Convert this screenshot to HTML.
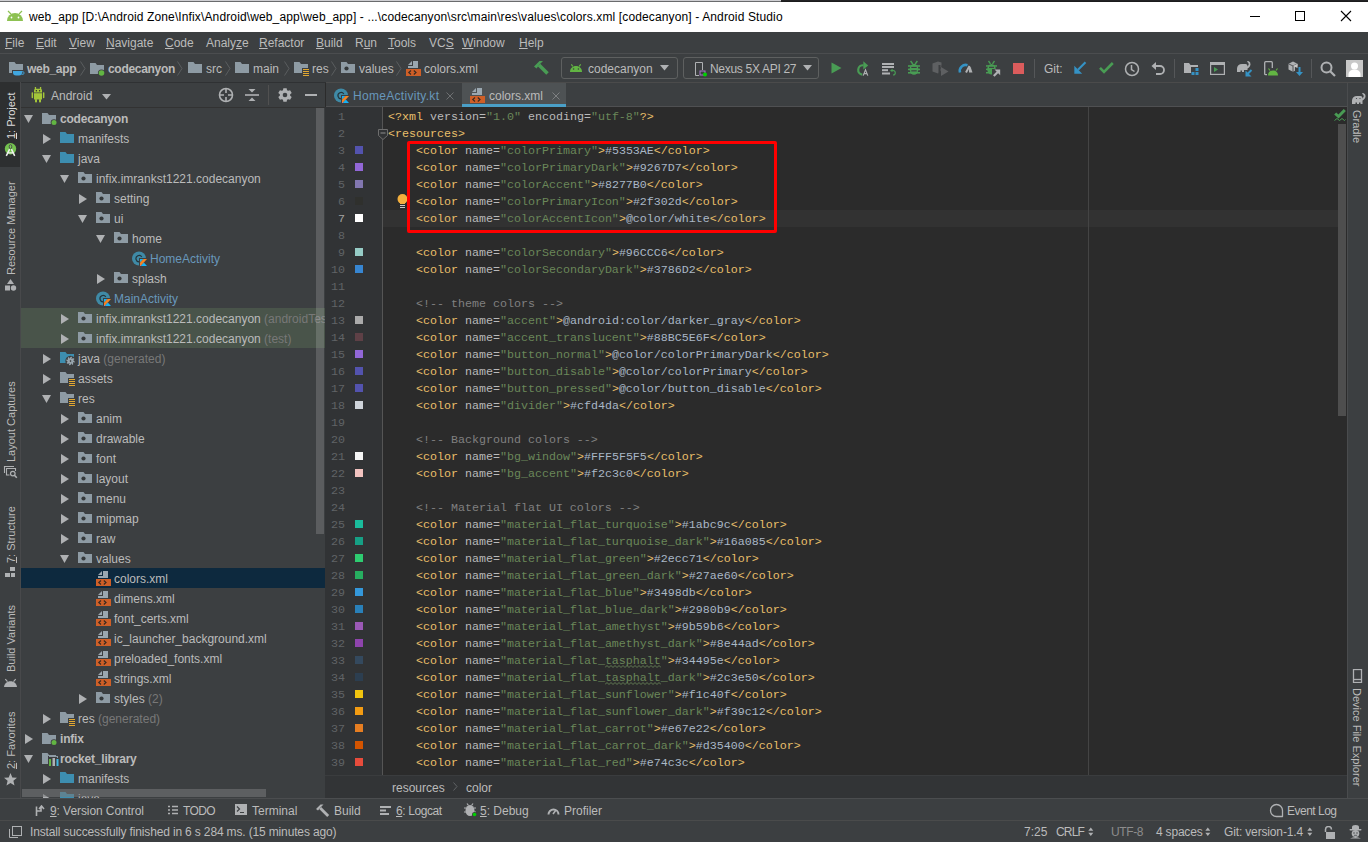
<!DOCTYPE html>
<html><head><meta charset="utf-8">
<style>
*{margin:0;padding:0;box-sizing:border-box}
html,body{width:1368px;height:842px;overflow:hidden;background:#3c3f41;font-family:"Liberation Sans",sans-serif;font-size:12px;color:#bbbbbb}
.a{position:absolute;display:block}
.t{position:absolute;white-space:pre;line-height:1}
.u{text-decoration:underline;text-underline-offset:1px}
</style></head><body>
<div class="a" style="left:0px;top:0px;width:781px;height:1px;background:#cfcfd3;"></div>
<div class="a" style="left:0px;top:1px;width:781px;height:1px;background:#6a6b6d;"></div>
<div class="a" style="left:781px;top:0px;width:587px;height:1px;background:#232325;"></div>
<div class="a" style="left:781px;top:1px;width:587px;height:1px;background:#1b1b1c;"></div>
<div class="a" style="left:0px;top:2px;width:1368px;height:30px;background:#ffffff;"></div>
<svg class="a" style="left:6px;top:10px;" width="18" height="11" viewBox="0 0 18 11"><path d="M2 1 L5 4 M16 1 L13 4" stroke="#8dc152" stroke-width="1.2"/><path d="M1 11 A8 8 0 0 1 17 11 Z" fill="#8dc152"/><circle cx="5.5" cy="7.5" r="0.9" fill="#fff"/><circle cx="12.5" cy="7.5" r="0.9" fill="#fff"/></svg>
<div class="t" style="left:29px;top:11px;font-size:12px;color:#000000;font-family:'Liberation Sans',sans-serif;letter-spacing:0.13px;">web_app [D:\Android Zone\Infix\Android\web_app\web_app] - ...\codecanyon\src\main\res\values\colors.xml [codecanyon] - Android Studio</div>
<div class="a" style="left:1250px;top:16px;width:10px;height:1px;background:#000;"></div>
<div class="a" style="left:1295px;top:11px;width:10px;height:10px;background:transparent;border:1px solid #000"></div>
<svg class="a" style="left:1340px;top:10px;" width="12" height="12" viewBox="0 0 12 12"><path d="M1 1 L11 11 M11 1 L1 11" stroke="#000" stroke-width="1.1"/></svg>
<div class="a" style="left:0px;top:32px;width:1368px;height:21px;background:#3c3f41;"></div>
<div class="a" style="left:0px;top:53px;width:1368px;height:1px;background:#4b4d4f;"></div>
<div class="t" style="left:5px;top:37px;font-size:12px;color:#bbbbbb;font-family:'Liberation Sans',sans-serif;"><span class="u">F</span>ile</div>
<div class="t" style="left:36px;top:37px;font-size:12px;color:#bbbbbb;font-family:'Liberation Sans',sans-serif;"><span class="u">E</span>dit</div>
<div class="t" style="left:69px;top:37px;font-size:12px;color:#bbbbbb;font-family:'Liberation Sans',sans-serif;"><span class="u">V</span>iew</div>
<div class="t" style="left:106px;top:37px;font-size:12px;color:#bbbbbb;font-family:'Liberation Sans',sans-serif;"><span class="u">N</span>avigate</div>
<div class="t" style="left:165px;top:37px;font-size:12px;color:#bbbbbb;font-family:'Liberation Sans',sans-serif;"><span class="u">C</span>ode</div>
<div class="t" style="left:206px;top:37px;font-size:12px;color:#bbbbbb;font-family:'Liberation Sans',sans-serif;">Analy<span class="u">z</span>e</div>
<div class="t" style="left:259px;top:37px;font-size:12px;color:#bbbbbb;font-family:'Liberation Sans',sans-serif;"><span class="u">R</span>efactor</div>
<div class="t" style="left:316px;top:37px;font-size:12px;color:#bbbbbb;font-family:'Liberation Sans',sans-serif;"><span class="u">B</span>uild</div>
<div class="t" style="left:355px;top:37px;font-size:12px;color:#bbbbbb;font-family:'Liberation Sans',sans-serif;">R<span class="u">u</span>n</div>
<div class="t" style="left:388px;top:37px;font-size:12px;color:#bbbbbb;font-family:'Liberation Sans',sans-serif;"><span class="u">T</span>ools</div>
<div class="t" style="left:429px;top:37px;font-size:12px;color:#bbbbbb;font-family:'Liberation Sans',sans-serif;">VC<span class="u">S</span></div>
<div class="t" style="left:462px;top:37px;font-size:12px;color:#bbbbbb;font-family:'Liberation Sans',sans-serif;"><span class="u">W</span>indow</div>
<div class="t" style="left:519px;top:37px;font-size:12px;color:#bbbbbb;font-family:'Liberation Sans',sans-serif;"><span class="u">H</span>elp</div>
<div class="a" style="left:0px;top:54px;width:1368px;height:28px;background:#3c3f41;"></div>
<div class="a" style="left:0px;top:82px;width:326px;height:1px;background:#2f3133;"></div>
<div class="a" style="left:326px;top:82px;width:1042px;height:1px;background:#4b4b4b;"></div>
<svg class="a" style="left:9px;top:62px;" width="17" height="16" viewBox="0 0 17 16"><path d="M0 0 H5.5 L7 2 H14 V11 H0 Z" fill="#8e9ba4"/><path d="M3 8 H14 V10.5 A4 4 0 0 1 10 14.5 H7 A4 4 0 0 1 3 10.5 Z" fill="#3c3f41"/><path d="M4 9 H13 V10.5 A3 3 0 0 1 10 13.5 H7 A3 3 0 0 1 4 10.5 Z" fill="#40a6e0"/><path d="M13 9.8 H14.3 A1.3 1.3 0 0 1 14.3 12.2 H12.5" stroke="#40a6e0" stroke-width="1" fill="none"/></svg>
<div class="t" style="left:27px;top:63px;font-size:12px;color:#bbbbbb;font-family:'Liberation Sans',sans-serif;font-weight:bold;letter-spacing:-0.3px;">web_app</div>
<svg class="a" style="left:80px;top:61px;" width="6" height="15" viewBox="0 0 6 15"><path d="M0.5 0.5 L5 7.5 L0.5 14.5" stroke="#5b5e60" stroke-width="1" fill="none"/></svg>
<svg class="a" style="left:90px;top:63px;" width="17" height="16" viewBox="0 0 17 16"><path d="M0 0 H5.5 L7 2 H14 V11 H0 Z" fill="#8e9ba4"/><circle cx="11.5" cy="10" r="3.6" fill="#3c3f41"/><circle cx="11.5" cy="10" r="2.8" fill="#62b543"/></svg>
<div class="t" style="left:108px;top:63px;font-size:12px;color:#bbbbbb;font-family:'Liberation Sans',sans-serif;font-weight:bold;letter-spacing:-0.3px;">codecanyon</div>
<svg class="a" style="left:177px;top:61px;" width="6" height="15" viewBox="0 0 6 15"><path d="M0.5 0.5 L5 7.5 L0.5 14.5" stroke="#5b5e60" stroke-width="1" fill="none"/></svg>
<svg class="a" style="left:188px;top:62px;" width="17" height="16" viewBox="0 0 17 16"><path d="M0 0 H5.5 L7 2 H14 V11 H0 Z" fill="#8e9ba4"/></svg>
<div class="t" style="left:206px;top:63px;font-size:12px;color:#bbbbbb;font-family:'Liberation Sans',sans-serif;">src</div>
<svg class="a" style="left:225px;top:61px;" width="6" height="15" viewBox="0 0 6 15"><path d="M0.5 0.5 L5 7.5 L0.5 14.5" stroke="#5b5e60" stroke-width="1" fill="none"/></svg>
<svg class="a" style="left:235px;top:62px;" width="17" height="16" viewBox="0 0 17 16"><path d="M0 0 H5.5 L7 2 H14 V11 H0 Z" fill="#8e9ba4"/></svg>
<div class="t" style="left:253px;top:63px;font-size:12px;color:#bbbbbb;font-family:'Liberation Sans',sans-serif;">main</div>
<svg class="a" style="left:284px;top:61px;" width="6" height="15" viewBox="0 0 6 15"><path d="M0.5 0.5 L5 7.5 L0.5 14.5" stroke="#5b5e60" stroke-width="1" fill="none"/></svg>
<svg class="a" style="left:294px;top:62px;" width="17" height="16" viewBox="0 0 17 16"><path d="M0 0 H5.5 L7 2 H14 V11 H0 Z" fill="#8e9ba4"/><rect x="8" y="6" width="8" height="8" fill="#3c3f41"/><rect x="9" y="7" width="6" height="1" fill="#e0a732"/><rect x="9" y="9" width="6" height="1" fill="#e0a732"/><rect x="9" y="11" width="6" height="1" fill="#e0a732"/><rect x="9" y="13" width="6" height="1" fill="#e0a732"/></svg>
<div class="t" style="left:312px;top:63px;font-size:12px;color:#bbbbbb;font-family:'Liberation Sans',sans-serif;">res</div>
<svg class="a" style="left:331px;top:61px;" width="6" height="15" viewBox="0 0 6 15"><path d="M0.5 0.5 L5 7.5 L0.5 14.5" stroke="#5b5e60" stroke-width="1" fill="none"/></svg>
<svg class="a" style="left:341px;top:62px;" width="17" height="16" viewBox="0 0 17 16"><path d="M0 0 H5.5 L7 2 H14 V11 H0 Z" fill="#8e9ba4"/><circle cx="5.5" cy="6.5" r="2.1" fill="#34383a"/></svg>
<div class="t" style="left:359px;top:63px;font-size:12px;color:#bbbbbb;font-family:'Liberation Sans',sans-serif;">values</div>
<svg class="a" style="left:396px;top:61px;" width="6" height="15" viewBox="0 0 6 15"><path d="M0.5 0.5 L5 7.5 L0.5 14.5" stroke="#5b5e60" stroke-width="1" fill="none"/></svg>
<svg class="a" style="left:406px;top:60px;" width="16" height="16" viewBox="0 0 16 16"><path d="M2 5 L6 1 V5 Z M7 1 H12 V8 H2 V6 H7 Z" fill="#9aa7b0"/><rect x="0" y="9" width="15" height="7" fill="#cf5f27"/><path d="M5 10.5 L2.8 12.5 L5 14.5 M7.8 10.5 L10 12.5 L7.8 14.5" stroke="#3a2a22" stroke-width="1.2" fill="none"/></svg>
<div class="t" style="left:424px;top:63px;font-size:12px;color:#bbbbbb;font-family:'Liberation Sans',sans-serif;">colors.xml</div>
<svg class="a" style="left:534px;top:60px;" width="16" height="16" viewBox="0 0 16 16"><path d="M5.5 1 H9 L5.5 4.5 L2.5 8.5 L0 6.5 Z" fill="#499c54"/><path d="M5 5 L13.5 13.5" stroke="#499c54" stroke-width="3.6"/></svg>
<div class="a" style="left:561px;top:57px;width:117px;height:22px;background:transparent;border:1px solid #5e6060;border-radius:3px"></div>
<svg class="a" style="left:569px;top:64px;" width="14" height="8" viewBox="0 0 14 8"><path d="M2.3 0.3 L3.8 2.3 M11.7 0.3 L10.2 2.3" stroke="#62b543" stroke-width="1.1"/><path d="M1 8 C1 4.5 3.5 2 7 2 C10.5 2 13 4.5 13 8 Z" fill="#62b543"/><circle cx="4.6" cy="5" r="0.8" fill="#3c3f41"/><circle cx="9.4" cy="5" r="0.8" fill="#3c3f41"/></svg>
<div class="t" style="left:588px;top:63px;font-size:12px;color:#bbbbbb;font-family:'Liberation Sans',sans-serif;">codecanyon</div>
<svg class="a" style="left:660px;top:65px;" width="9" height="6" viewBox="0 0 9 6"><path d="M0 0 H9 L4.5 5.5 Z" fill="#afb1b3"/></svg>
<div class="a" style="left:683px;top:57px;width:136px;height:22px;background:transparent;border:1px solid #5e6060;border-radius:3px"></div>
<svg class="a" style="left:693px;top:61px;" width="16" height="16" viewBox="0 0 16 16"><path d="M2.5 1.5 H9.5 V14.5 H2.5 Z" stroke="#afb1b3" fill="none" stroke-width="1"/><rect x="6" y="9" width="7" height="6" fill="#3c3f41"/><rect x="7" y="10" width="5" height="4" fill="none" stroke="#a77bca" stroke-width="1"/><circle cx="12" cy="13.5" r="2" fill="#00d000"/></svg>
<div class="t" style="left:710px;top:63px;font-size:12px;color:#bbbbbb;font-family:'Liberation Sans',sans-serif;letter-spacing:-0.3px;">Nexus 5X API 27</div>
<svg class="a" style="left:803px;top:65px;" width="9" height="6" viewBox="0 0 9 6"><path d="M0 0 H9 L4.5 5.5 Z" fill="#afb1b3"/></svg>
<svg class="a" style="left:831px;top:62px;" width="11" height="12" viewBox="0 0 11 12"><path d="M0.5 0.5 L10.5 6 L0.5 11.5 Z" fill="#499c54"/></svg>
<svg class="a" style="left:854px;top:60px;" width="16" height="16" viewBox="0 0 16 16"><path d="M8.3 14.6 A4.6 4.6 0 0 1 9.5 5.3" stroke="#499c54" stroke-width="2.2" fill="none"/><path d="M9.3 1.2 L14.2 5.4 L9.3 9.6 Z" fill="#499c54"/><path d="M9.2 15.6 L11.5 9.8 L13.8 15.6 M10 13.6 H13" stroke="#afb1b3" stroke-width="1.2" fill="none"/></svg>
<svg class="a" style="left:882px;top:62px;" width="15" height="14" viewBox="0 0 15 14"><rect x="0" y="1" width="12" height="2" fill="#afb1b3"/><rect x="0" y="4" width="12" height="2" fill="#afb1b3"/><rect x="0" y="7.2" width="6" height="2" fill="#afb1b3"/><rect x="0" y="10.5" width="8" height="2" fill="#afb1b3"/><path d="M9.2 8.6 C11.5 7.8 13.5 9 13.3 11 C13.2 12.3 12 13 11 13" stroke="#499c54" stroke-width="1.2" fill="none"/><path d="M8 8.8 L10.4 6.8 L10.6 10 Z" fill="#499c54"/></svg>
<svg class="a" style="left:906px;top:60px;" width="16" height="16" viewBox="0 0 16 16"><path d="M4.6 1 L6.8 4 M11.4 1 L9.2 4" stroke="#499c54" stroke-width="1.4"/><ellipse cx="8" cy="9.3" rx="4.4" ry="5.5" fill="#499c54"/><rect x="2" y="5.2" width="12" height="1.6" fill="#499c54"/><rect x="2" y="8.6" width="12" height="1.6" fill="#499c54"/><rect x="2" y="12" width="12" height="1.6" fill="#499c54"/><rect x="5.3" y="6.9" width="5.4" height="1.1" fill="#3c3f41"/><rect x="5.3" y="10.3" width="5.4" height="1.1" fill="#3c3f41"/></svg>
<svg class="a" style="left:932px;top:61px;" width="17" height="17" viewBox="0 0 17 17"><path d="M0.5 2.5 L6 0.5 L9.5 1.5 V9 L6 12.5 L0.5 10.5 Z" fill="#5e6062"/><rect x="6.5" y="4" width="2" height="8" fill="#3c3f41"/><path d="M7.5 7 L10 7 L10 4.5" stroke="#3c3f41" stroke-width="1" fill="none"/><path d="M9 6 L16.5 10.5 L9 15 Z" fill="#5e6062"/></svg>
<svg class="a" style="left:957px;top:62px;" width="17" height="12" viewBox="0 0 17 12"><path d="M3 10.5 A6 6 0 0 1 10.5 3.2" stroke="#3592c4" stroke-width="2.6" fill="none"/><path d="M12 3.8 L13.8 5.5 L15.5 10.5 H12 Z" fill="#afb1b3"/><path d="M9 10.5 L12.5 4" stroke="#afb1b3" stroke-width="2"/></svg>
<svg class="a" style="left:984px;top:60px;" width="17" height="17" viewBox="0 0 17 17"><path d="M4.5 1 L6.5 3.8 M10.5 1 L8.5 3.8" stroke="#499c54" stroke-width="1.3"/><ellipse cx="7.5" cy="9.2" rx="4.3" ry="5.3" fill="#499c54"/><rect x="2" y="5.2" width="11" height="1.5" fill="#499c54"/><rect x="2" y="8.6" width="4" height="1.5" fill="#499c54"/><rect x="2" y="12" width="4" height="1.5" fill="#499c54"/><rect x="5" y="6.8" width="5" height="1.1" fill="#3c3f41"/><path d="M8 17 V9 H17 V17 Z" fill="#3c3f41"/><path d="M9.8 16 L14.5 11.3" stroke="#afb1b3" stroke-width="2.2"/><path d="M10.5 9.5 H16.2 V15.2 Z" fill="#afb1b3"/></svg>
<div class="a" style="left:1013px;top:63px;width:11px;height:11px;background:#db5c5c;"></div>
<div class="a" style="left:1034px;top:59px;width:1px;height:19px;background:#555759;"></div>
<div class="t" style="left:1044px;top:63px;font-size:12px;color:#bbbbbb;font-family:'Liberation Sans',sans-serif;">Git:</div>
<svg class="a" style="left:1073px;top:61px;" width="14" height="14" viewBox="0 0 14 14"><path d="M12.5 1.2 L5 8.7" stroke="#3592c4" stroke-width="2.1"/><path d="M1.3 4.8 V12.7 H9.2 Z" fill="#3592c4"/></svg>
<svg class="a" style="left:1099px;top:62px;" width="15" height="12" viewBox="0 0 15 12"><path d="M1 5.8 L5 9.8 L13.8 1" stroke="#499c54" stroke-width="2.6" fill="none"/></svg>
<svg class="a" style="left:1124px;top:61px;" width="16" height="16" viewBox="0 0 16 16"><circle cx="8" cy="8" r="6.5" stroke="#afb1b3" stroke-width="1.5" fill="none"/><path d="M7.5 4 V8.5 L10.5 10.5" stroke="#afb1b3" stroke-width="1.5" fill="none"/></svg>
<svg class="a" style="left:1151px;top:61px;" width="15" height="15" viewBox="0 0 15 15"><path d="M4 5 H9 A4 4 0 0 1 9 13 H5" stroke="#afb1b3" stroke-width="1.8" fill="none"/><path d="M0.5 5 L5 1 V9 Z" fill="#afb1b3"/></svg>
<div class="a" style="left:1174px;top:59px;width:1px;height:19px;background:#555759;"></div>
<svg class="a" style="left:1184px;top:63px;" width="15" height="13" viewBox="0 0 15 13"><path d="M0 0 H5 L6.5 2 H14 V10 H0 Z" fill="#afb1b3"/><rect x="7" y="4" width="8" height="9" fill="#3c3f41"/><rect x="11.5" y="5" width="3" height="3" fill="#3592c4"/><rect x="7.5" y="9" width="3" height="3" fill="#3592c4"/><rect x="11.5" y="9" width="3" height="3" fill="#3592c4"/></svg>
<svg class="a" style="left:1210px;top:62px;" width="15" height="13" viewBox="0 0 15 13"><rect x="0.6" y="0.6" width="13.8" height="11.8" stroke="#afb1b3" stroke-width="1.2" fill="none"/><rect x="0" y="0" width="15" height="3" fill="#afb1b3"/><path d="M4 5 L8 7.5 L4 10 Z" fill="#499c54"/></svg>
<svg class="a" style="left:1236px;top:60px;" width="17" height="17" viewBox="0 0 17 17"><path d="M1 12 V8.5 C1 6 3 4 6 4 H9.5 C11 4 11.5 5 11.5 6.5 V12 H9.5 V10.5 H8 V12 H6 V10.5 H4.5 V12 Z" fill="#afb1b3"/><path d="M10.5 8 C13 7 14.2 4.8 13.3 2.8 C12.8 1.9 12 1.8 11.6 2.3" stroke="#afb1b3" stroke-width="1.8" fill="none"/><path d="M8 17 V10 H17 V17 Z" fill="#3c3f41"/><path d="M15.5 10 L10.5 15" stroke="#3592c4" stroke-width="2"/><path d="M9.5 10.5 V16.5 H15.5 Z" fill="#3592c4"/></svg>
<svg class="a" style="left:1264px;top:61px;" width="14" height="15" viewBox="0 0 14 15"><rect x="0.7" y="0.7" width="7.6" height="13" rx="1" stroke="#afb1b3" stroke-width="1.3" fill="none"/><rect x="3" y="7" width="11" height="8" fill="#3c3f41"/><path d="M4 14.5 C4 11.5 6 9.5 9 9.5 C12 9.5 14 11.5 14 14.5 Z" fill="#62b543"/><path d="M4.5 7.5 L6 9.5 M13.5 7.5 L12 9.5" stroke="#62b543" stroke-width="1.1"/></svg>
<svg class="a" style="left:1288px;top:61px;" width="16" height="16" viewBox="0 0 16 16"><path d="M5 0.5 L9.5 2.8 V8.5 L5 10.8 L0.5 8.5 V2.8 Z" fill="#afb1b3"/><path d="M0.5 2.8 L5 5 L9.5 2.8 M5 5 V10.8" stroke="#3c3f41" stroke-width="0.8" fill="none"/><rect x="7" y="5.5" width="9" height="10.5" fill="#3c3f41"/><path d="M5 5 L9.5 2.8 V7" fill="#c8c8c8"/><path d="M11.5 6 V13" stroke="#3592c4" stroke-width="2"/><path d="M8 11 L11.5 15 L15 11 Z" fill="#3592c4"/></svg>
<div class="a" style="left:1311px;top:59px;width:1px;height:19px;background:#555759;"></div>
<svg class="a" style="left:1320px;top:61px;" width="16" height="16" viewBox="0 0 16 16"><circle cx="6.5" cy="6.5" r="5" stroke="#afb1b3" stroke-width="2" fill="none"/><path d="M10 10 L15 15" stroke="#afb1b3" stroke-width="2.2"/></svg>
<svg class="a" style="left:1346px;top:60px;" width="17" height="17" viewBox="0 0 17 17"><rect x="0" y="0" width="17" height="17" fill="#c8c8c8"/><circle cx="8.5" cy="6" r="3.5" fill="#fff"/><path d="M2.5 17 V14 A6 4.5 0 0 1 14.5 14 V17 Z" fill="#fff"/></svg>
<div class="a" style="left:0px;top:83px;width:20px;height:717px;background:#3c3f41;"></div>
<div class="a" style="left:0px;top:82px;width:20px;height:85px;background:#2d2f30;"></div>
<div class="a" style="left:20px;top:82px;width:1px;height:717px;background:#48494b;"></div>
<div class="t" style="left:6px;top:139px;font-size:11px;color:#dcdcdc;transform-origin:0 0;transform:rotate(-90deg)"><span class="u">1</span>: Project</div>
<svg class="a" style="left:4px;top:142px;" width="13" height="15" viewBox="0 0 13 15"><circle cx="6.5" cy="6.7" r="5.7" fill="#74c24f"/><path d="M5.6 7.2 L2.3 13.8 M7.4 7.2 L10.7 13.8" stroke="#f0f0f0" stroke-width="1.5"/><path d="M3.6 10.4 Q6.5 11.4 9.4 10.4" stroke="#f0f0f0" stroke-width="1.1" fill="none"/><ellipse cx="6.5" cy="4.7" rx="1.3" ry="2" stroke="#4a4f4a" stroke-width="1" fill="#7fc860"/></svg>
<div class="t" style="left:6px;top:275px;font-size:11px;color:#bbbbbb;transform-origin:0 0;transform:rotate(-90deg)">Resource Manager</div>
<svg class="a" style="left:4px;top:279px;" width="13" height="12" viewBox="0 0 13 12"><path d="M6.5 0 L10 5 H3 Z" fill="#afb1b3"/><rect x="1" y="6.5" width="5" height="5" fill="#afb1b3"/><circle cx="9.5" cy="9" r="2.7" fill="#afb1b3"/></svg>
<div class="t" style="left:6px;top:462px;font-size:11px;color:#bbbbbb;transform-origin:0 0;transform:rotate(-90deg)">Layout Captures</div>
<svg class="a" style="left:3px;top:465px;" width="15" height="14" viewBox="0 0 15 14"><path d="M1.5 8 V1.5 H11" stroke="#afb1b3" stroke-width="1.1" fill="none"/><path d="M6.5 10 H3.5 V3.5 H12.5 V6" stroke="#afb1b3" stroke-width="1.1" fill="none"/><circle cx="9.8" cy="8.6" r="2.3" stroke="#afb1b3" stroke-width="1.2" fill="none"/><path d="M11.4 10.3 L13.8 12.7" stroke="#afb1b3" stroke-width="1.6"/></svg>
<div class="t" style="left:6px;top:563px;font-size:11px;color:#bbbbbb;transform-origin:0 0;transform:rotate(-90deg)"><span class="u">7</span>: Structure</div>
<svg class="a" style="left:5px;top:567px;" width="11" height="11" viewBox="0 0 11 11"><rect x="5" y="0" width="5" height="4" fill="#afb1b3"/><rect x="0" y="6" width="5" height="4" fill="#afb1b3"/><rect x="6" y="6" width="4" height="4" fill="#afb1b3"/></svg>
<div class="t" style="left:6px;top:672px;font-size:11px;color:#bbbbbb;transform-origin:0 0;transform:rotate(-90deg)">Build Variants</div>
<svg class="a" style="left:3px;top:678px;" width="15" height="10" viewBox="0 0 15 10"><path d="M2.3 1.2 L4.5 3.6 M12.7 1.2 L10.5 3.6" stroke="#afb1b3" stroke-width="1.2"/><path d="M1 9 C1.3 5.5 4 3.2 7.5 3.2 C11 3.2 13.7 5.5 14 9 Z" fill="#afb1b3"/></svg>
<div class="t" style="left:6px;top:769px;font-size:11px;color:#bbbbbb;transform-origin:0 0;transform:rotate(-90deg)"><span class="u">2</span>: Favorites</div>
<svg class="a" style="left:4px;top:773px;" width="13" height="13" viewBox="0 0 13 13"><path d="M6.5 0 L8.3 4.5 L13 4.8 L9.4 7.8 L10.5 12.5 L6.5 10 L2.5 12.5 L3.6 7.8 L0 4.8 L4.7 4.5 Z" fill="#afb1b3"/></svg>
<div class="a" style="left:21px;top:83px;width:304px;height:24px;background:#3c3f41;"></div>
<div class="a" style="left:21px;top:107px;width:304px;height:1px;background:#323232;"></div>
<div class="a" style="left:325px;top:83px;width:1px;height:24px;background:#2b2b2b;"></div>
<div class="a" style="left:325px;top:107px;width:1px;height:692px;background:#303234;"></div>
<svg class="a" style="left:31px;top:86px;" width="14" height="17" viewBox="0 0 14 17"><rect x="3.8" y="1" width="1.3" height="3" fill="#a4c639"/><rect x="8.9" y="1" width="1.3" height="3" fill="#a4c639"/><path d="M3 6.5 V4.5 C3 3.3 4 2.8 5 2.8 H9 C10 2.8 11 3.3 11 4.5 V6.5 Z" fill="#a4c639"/><circle cx="5.4" cy="4.7" r="0.75" fill="#2b2d2f"/><circle cx="8.6" cy="4.7" r="0.75" fill="#2b2d2f"/><rect x="3" y="7.2" width="8" height="6.3" fill="#a4c639"/><rect x="0.6" y="6.3" width="1.5" height="6" rx="0.7" fill="#a4c639"/><rect x="11.9" y="6.3" width="1.5" height="6" rx="0.7" fill="#a4c639"/><rect x="4" y="13" width="2" height="3.5" rx="0.8" fill="#a4c639"/><rect x="8" y="13" width="2" height="3.5" rx="0.8" fill="#a4c639"/></svg>
<div class="t" style="left:51px;top:90px;font-size:12px;color:#bbbbbb;font-family:'Liberation Sans',sans-serif;">Android</div>
<svg class="a" style="left:102px;top:94px;" width="9" height="6" viewBox="0 0 9 6"><path d="M0 0 H9 L4.5 5.5 Z" fill="#afb1b3"/></svg>
<svg class="a" style="left:218px;top:87px;" width="16" height="16" viewBox="0 0 16 16"><circle cx="8" cy="8" r="6.5" stroke="#afb1b3" stroke-width="1.6" fill="none"/><path d="M8 1 V6 M8 10 V15 M1 8 H6 M10 8 H15" stroke="#afb1b3" stroke-width="1.6"/></svg>
<svg class="a" style="left:245px;top:88px;" width="14" height="14" viewBox="0 0 14 14"><path d="M0 7 H14" stroke="#afb1b3" stroke-width="1.6"/><path d="M3.5 1 H10.5 L7 4.5 Z M3.5 13 H10.5 L7 9.5 Z" fill="#afb1b3"/></svg>
<div class="a" style="left:268px;top:85px;width:1px;height:20px;background:#515151;"></div>
<svg class="a" style="left:278px;top:88px;" width="14" height="14" viewBox="0 0 14 14"><path d="M4.98 2.21 L5.34 0.20 L8.66 0.20 L9.02 2.21 L10.14 2.85 L12.06 2.16 L13.72 5.04 L12.16 6.36 L12.16 7.64 L13.72 8.96 L12.06 11.84 L10.14 11.15 L9.02 11.79 L8.66 13.80 L5.34 13.80 L4.98 11.79 L3.86 11.15 L1.94 11.84 L0.28 8.96 L1.84 7.64 L1.84 6.36 L0.28 5.04 L1.94 2.16 L3.86 2.85 Z" fill="#afb1b3"/><circle cx="7" cy="7" r="2.3" fill="#3c3f41"/></svg>
<div class="a" style="left:305px;top:94px;width:12px;height:2px;background:#afb1b3;"></div>
<div class="a" style="left:21px;top:108px;width:304px;height:691px;overflow:hidden">
<div class="a" style="left:0px;top:200px;width:304px;height:40px;background:#49544a"></div>
<div class="a" style="left:0px;top:460px;width:304px;height:20px;background:#0d293e"></div>
<svg class="a" style="left:3px;top:7px" width="9" height="8" viewBox="0 0 9 8"><path d="M0 0 H9 L4.5 8 Z" fill="#afb1b3"/></svg>
<svg class="a" style="left:21px;top:5px" width="17" height="14" viewBox="0 0 17 14"><path d="M0 0 H5.5 L7 2 H14 V11 H0 Z" fill="#8e9ba4"/><circle cx="12" cy="9.5" r="3.3" fill="#3c3f41"/><circle cx="12" cy="9.5" r="2.5" fill="#62b543"/></svg>
<div class="t" style="left:39px;top:5px;color:#bbbbbb;font-weight:bold;letter-spacing:-0.2px;">codecanyon</div>
<svg class="a" style="left:22px;top:26px" width="8" height="10" viewBox="0 0 8 10"><path d="M0 0 L8 5 L0 10 Z" fill="#afb1b3"/></svg>
<svg class="a" style="left:39px;top:24px" width="17" height="14" viewBox="0 0 17 14"><path d="M0 0 H5.5 L7 2 H14 V11 H0 Z" fill="#3d8eb0"/></svg>
<div class="t" style="left:57px;top:25px;color:#bbbbbb;">manifests</div>
<svg class="a" style="left:21px;top:47px" width="9" height="8" viewBox="0 0 9 8"><path d="M0 0 H9 L4.5 8 Z" fill="#afb1b3"/></svg>
<svg class="a" style="left:39px;top:44px" width="17" height="14" viewBox="0 0 17 14"><path d="M0 0 H5.5 L7 2 H14 V11 H0 Z" fill="#3d8eb0"/></svg>
<div class="t" style="left:57px;top:45px;color:#bbbbbb;">java</div>
<svg class="a" style="left:39px;top:67px" width="9" height="8" viewBox="0 0 9 8"><path d="M0 0 H9 L4.5 8 Z" fill="#afb1b3"/></svg>
<svg class="a" style="left:57px;top:64px" width="17" height="14" viewBox="0 0 17 14"><path d="M0 0 H5.5 L7 2 H14 V11 H0 Z" fill="#8e9ba4"/><circle cx="5.5" cy="6.5" r="2.1" fill="#34383a"/></svg>
<div class="t" style="left:75px;top:65px;color:#bbbbbb;">infix.imrankst1221.codecanyon</div>
<svg class="a" style="left:58px;top:86px" width="8" height="10" viewBox="0 0 8 10"><path d="M0 0 L8 5 L0 10 Z" fill="#afb1b3"/></svg>
<svg class="a" style="left:75px;top:84px" width="17" height="14" viewBox="0 0 17 14"><path d="M0 0 H5.5 L7 2 H14 V11 H0 Z" fill="#8e9ba4"/><circle cx="5.5" cy="6.5" r="2.1" fill="#34383a"/></svg>
<div class="t" style="left:93px;top:85px;color:#bbbbbb;">setting</div>
<svg class="a" style="left:57px;top:107px" width="9" height="8" viewBox="0 0 9 8"><path d="M0 0 H9 L4.5 8 Z" fill="#afb1b3"/></svg>
<svg class="a" style="left:75px;top:104px" width="17" height="14" viewBox="0 0 17 14"><path d="M0 0 H5.5 L7 2 H14 V11 H0 Z" fill="#8e9ba4"/><circle cx="5.5" cy="6.5" r="2.1" fill="#34383a"/></svg>
<div class="t" style="left:93px;top:105px;color:#bbbbbb;">ui</div>
<svg class="a" style="left:75px;top:127px" width="9" height="8" viewBox="0 0 9 8"><path d="M0 0 H9 L4.5 8 Z" fill="#afb1b3"/></svg>
<svg class="a" style="left:93px;top:124px" width="17" height="14" viewBox="0 0 17 14"><path d="M0 0 H5.5 L7 2 H14 V11 H0 Z" fill="#8e9ba4"/><circle cx="5.5" cy="6.5" r="2.1" fill="#34383a"/></svg>
<div class="t" style="left:111px;top:125px;color:#bbbbbb;">home</div>
<svg class="a" style="left:111px;top:143px" width="16" height="16" viewBox="0 0 16 16"><circle cx="7" cy="7.5" r="7" fill="#3f8aa6"/><path d="M9.8 5.8 A3.2 3.2 0 1 0 7.5 10.8" stroke="#23343b" stroke-width="1.2" fill="none"/><rect x="7" y="7" width="9" height="9" fill="#3c3f41"/><path d="M8 8 H11.5 L8 11.5 Z" fill="#18b2f5"/><path d="M11.5 8 H15 L8.7 15 H8 V11.5 Z" fill="#f48323"/><path d="M8 15 V13.5 L9 15 Z" fill="#e95a9a"/><path d="M8.7 15 L11.8 11.5 L15 15 Z" fill="#18b2f5"/></svg>
<div class="t" style="left:129px;top:145px;color:#6897bb;">HomeActivity</div>
<svg class="a" style="left:76px;top:166px" width="8" height="10" viewBox="0 0 8 10"><path d="M0 0 L8 5 L0 10 Z" fill="#afb1b3"/></svg>
<svg class="a" style="left:93px;top:164px" width="17" height="14" viewBox="0 0 17 14"><path d="M0 0 H5.5 L7 2 H14 V11 H0 Z" fill="#8e9ba4"/><circle cx="5.5" cy="6.5" r="2.1" fill="#34383a"/></svg>
<div class="t" style="left:111px;top:165px;color:#bbbbbb;">splash</div>
<svg class="a" style="left:75px;top:183px" width="16" height="16" viewBox="0 0 16 16"><circle cx="7" cy="7.5" r="7" fill="#3f8aa6"/><path d="M9.8 5.8 A3.2 3.2 0 1 0 7.5 10.8" stroke="#23343b" stroke-width="1.2" fill="none"/><rect x="7" y="7" width="9" height="9" fill="#3c3f41"/><path d="M8 8 H11.5 L8 11.5 Z" fill="#18b2f5"/><path d="M11.5 8 H15 L8.7 15 H8 V11.5 Z" fill="#f48323"/><path d="M8 15 V13.5 L9 15 Z" fill="#e95a9a"/><path d="M8.7 15 L11.8 11.5 L15 15 Z" fill="#18b2f5"/></svg>
<div class="t" style="left:93px;top:185px;color:#6897bb;">MainActivity</div>
<svg class="a" style="left:40px;top:206px" width="8" height="10" viewBox="0 0 8 10"><path d="M0 0 L8 5 L0 10 Z" fill="#afb1b3"/></svg>
<svg class="a" style="left:57px;top:204px" width="17" height="14" viewBox="0 0 17 14"><path d="M0 0 H5.5 L7 2 H14 V11 H0 Z" fill="#8e9ba4"/><circle cx="5.5" cy="6.5" r="2.1" fill="#34383a"/></svg>
<div class="t" style="left:75px;top:205px;color:#bbbbbb;">infix.imrankst1221.codecanyon<span style="color:#787878"> (androidTest)</span></div>
<svg class="a" style="left:40px;top:226px" width="8" height="10" viewBox="0 0 8 10"><path d="M0 0 L8 5 L0 10 Z" fill="#afb1b3"/></svg>
<svg class="a" style="left:57px;top:224px" width="17" height="14" viewBox="0 0 17 14"><path d="M0 0 H5.5 L7 2 H14 V11 H0 Z" fill="#8e9ba4"/><circle cx="5.5" cy="6.5" r="2.1" fill="#34383a"/></svg>
<div class="t" style="left:75px;top:225px;color:#bbbbbb;">infix.imrankst1221.codecanyon<span style="color:#787878"> (test)</span></div>
<svg class="a" style="left:22px;top:246px" width="8" height="10" viewBox="0 0 8 10"><path d="M0 0 L8 5 L0 10 Z" fill="#afb1b3"/></svg>
<svg class="a" style="left:39px;top:244px" width="17" height="14" viewBox="0 0 17 14"><path d="M0 0 H5.5 L7 2 H14 V11 H0 Z" fill="#3d8eb0"/><circle cx="10.5" cy="9" r="5.2" fill="#3c3f41"/><ellipse cx="12.90" cy="9.00" rx="2.2" ry="0.9" transform="rotate(35 12.90 9.00)" fill="#9aa7b0"/><ellipse cx="12.20" cy="10.70" rx="2.2" ry="0.9" transform="rotate(80 12.20 10.70)" fill="#9aa7b0"/><ellipse cx="10.50" cy="11.40" rx="2.2" ry="0.9" transform="rotate(125 10.50 11.40)" fill="#9aa7b0"/><ellipse cx="8.80" cy="10.70" rx="2.2" ry="0.9" transform="rotate(170 8.80 10.70)" fill="#9aa7b0"/><ellipse cx="8.10" cy="9.00" rx="2.2" ry="0.9" transform="rotate(215 8.10 9.00)" fill="#9aa7b0"/><ellipse cx="8.80" cy="7.30" rx="2.2" ry="0.9" transform="rotate(260 8.80 7.30)" fill="#9aa7b0"/><ellipse cx="10.50" cy="6.60" rx="2.2" ry="0.9" transform="rotate(305 10.50 6.60)" fill="#9aa7b0"/><ellipse cx="12.20" cy="7.30" rx="2.2" ry="0.9" transform="rotate(350 12.20 7.30)" fill="#9aa7b0"/></svg>
<div class="t" style="left:57px;top:245px;color:#bbbbbb;">java<span style="color:#787878"> (generated)</span></div>
<svg class="a" style="left:22px;top:266px" width="8" height="10" viewBox="0 0 8 10"><path d="M0 0 L8 5 L0 10 Z" fill="#afb1b3"/></svg>
<svg class="a" style="left:39px;top:264px" width="17" height="14" viewBox="0 0 17 14"><path d="M0 0 H5.5 L7 2 H14 V11 H0 Z" fill="#8e9ba4"/><rect x="8" y="6" width="8" height="8" fill="#3c3f41"/><rect x="9" y="7" width="6" height="1" fill="#e0a732"/><rect x="9" y="9" width="6" height="1" fill="#e0a732"/><rect x="9" y="11" width="6" height="1" fill="#e0a732"/><rect x="9" y="13" width="6" height="1" fill="#e0a732"/></svg>
<div class="t" style="left:57px;top:265px;color:#bbbbbb;">assets</div>
<svg class="a" style="left:21px;top:287px" width="9" height="8" viewBox="0 0 9 8"><path d="M0 0 H9 L4.5 8 Z" fill="#afb1b3"/></svg>
<svg class="a" style="left:39px;top:284px" width="17" height="14" viewBox="0 0 17 14"><path d="M0 0 H5.5 L7 2 H14 V11 H0 Z" fill="#8e9ba4"/><rect x="8" y="6" width="8" height="8" fill="#3c3f41"/><rect x="9" y="7" width="6" height="1" fill="#e0a732"/><rect x="9" y="9" width="6" height="1" fill="#e0a732"/><rect x="9" y="11" width="6" height="1" fill="#e0a732"/><rect x="9" y="13" width="6" height="1" fill="#e0a732"/></svg>
<div class="t" style="left:57px;top:285px;color:#bbbbbb;">res</div>
<svg class="a" style="left:40px;top:306px" width="8" height="10" viewBox="0 0 8 10"><path d="M0 0 L8 5 L0 10 Z" fill="#afb1b3"/></svg>
<svg class="a" style="left:57px;top:304px" width="17" height="14" viewBox="0 0 17 14"><path d="M0 0 H5.5 L7 2 H14 V11 H0 Z" fill="#8e9ba4"/><circle cx="5.5" cy="6.5" r="2.1" fill="#34383a"/></svg>
<div class="t" style="left:75px;top:305px;color:#bbbbbb;">anim</div>
<svg class="a" style="left:40px;top:326px" width="8" height="10" viewBox="0 0 8 10"><path d="M0 0 L8 5 L0 10 Z" fill="#afb1b3"/></svg>
<svg class="a" style="left:57px;top:324px" width="17" height="14" viewBox="0 0 17 14"><path d="M0 0 H5.5 L7 2 H14 V11 H0 Z" fill="#8e9ba4"/><circle cx="5.5" cy="6.5" r="2.1" fill="#34383a"/></svg>
<div class="t" style="left:75px;top:325px;color:#bbbbbb;">drawable</div>
<svg class="a" style="left:40px;top:346px" width="8" height="10" viewBox="0 0 8 10"><path d="M0 0 L8 5 L0 10 Z" fill="#afb1b3"/></svg>
<svg class="a" style="left:57px;top:344px" width="17" height="14" viewBox="0 0 17 14"><path d="M0 0 H5.5 L7 2 H14 V11 H0 Z" fill="#8e9ba4"/><circle cx="5.5" cy="6.5" r="2.1" fill="#34383a"/></svg>
<div class="t" style="left:75px;top:345px;color:#bbbbbb;">font</div>
<svg class="a" style="left:40px;top:366px" width="8" height="10" viewBox="0 0 8 10"><path d="M0 0 L8 5 L0 10 Z" fill="#afb1b3"/></svg>
<svg class="a" style="left:57px;top:364px" width="17" height="14" viewBox="0 0 17 14"><path d="M0 0 H5.5 L7 2 H14 V11 H0 Z" fill="#8e9ba4"/><circle cx="5.5" cy="6.5" r="2.1" fill="#34383a"/></svg>
<div class="t" style="left:75px;top:365px;color:#bbbbbb;">layout</div>
<svg class="a" style="left:40px;top:386px" width="8" height="10" viewBox="0 0 8 10"><path d="M0 0 L8 5 L0 10 Z" fill="#afb1b3"/></svg>
<svg class="a" style="left:57px;top:384px" width="17" height="14" viewBox="0 0 17 14"><path d="M0 0 H5.5 L7 2 H14 V11 H0 Z" fill="#8e9ba4"/><circle cx="5.5" cy="6.5" r="2.1" fill="#34383a"/></svg>
<div class="t" style="left:75px;top:385px;color:#bbbbbb;">menu</div>
<svg class="a" style="left:40px;top:406px" width="8" height="10" viewBox="0 0 8 10"><path d="M0 0 L8 5 L0 10 Z" fill="#afb1b3"/></svg>
<svg class="a" style="left:57px;top:404px" width="17" height="14" viewBox="0 0 17 14"><path d="M0 0 H5.5 L7 2 H14 V11 H0 Z" fill="#8e9ba4"/><circle cx="5.5" cy="6.5" r="2.1" fill="#34383a"/></svg>
<div class="t" style="left:75px;top:405px;color:#bbbbbb;">mipmap</div>
<svg class="a" style="left:40px;top:426px" width="8" height="10" viewBox="0 0 8 10"><path d="M0 0 L8 5 L0 10 Z" fill="#afb1b3"/></svg>
<svg class="a" style="left:57px;top:424px" width="17" height="14" viewBox="0 0 17 14"><path d="M0 0 H5.5 L7 2 H14 V11 H0 Z" fill="#8e9ba4"/><circle cx="5.5" cy="6.5" r="2.1" fill="#34383a"/></svg>
<div class="t" style="left:75px;top:425px;color:#bbbbbb;">raw</div>
<svg class="a" style="left:39px;top:447px" width="9" height="8" viewBox="0 0 9 8"><path d="M0 0 H9 L4.5 8 Z" fill="#afb1b3"/></svg>
<svg class="a" style="left:57px;top:444px" width="17" height="14" viewBox="0 0 17 14"><path d="M0 0 H5.5 L7 2 H14 V11 H0 Z" fill="#8e9ba4"/><circle cx="5.5" cy="6.5" r="2.1" fill="#34383a"/></svg>
<div class="t" style="left:75px;top:445px;color:#bbbbbb;">values</div>
<svg class="a" style="left:75px;top:462px" width="16" height="16" viewBox="0 0 16 16"><path d="M2 5 L6 1 V5 Z M7 1 H12 V8 H2 V6 H7 Z" fill="#9aa7b0"/><rect x="0" y="9" width="15" height="7" fill="#cf5f27"/><path d="M5 10.5 L2.8 12.5 L5 14.5 M7.8 10.5 L10 12.5 L7.8 14.5" stroke="#3a2a22" stroke-width="1.2" fill="none"/></svg>
<div class="t" style="left:93px;top:465px;color:#bbbbbb;">colors.xml</div>
<svg class="a" style="left:75px;top:482px" width="16" height="16" viewBox="0 0 16 16"><path d="M2 5 L6 1 V5 Z M7 1 H12 V8 H2 V6 H7 Z" fill="#9aa7b0"/><rect x="0" y="9" width="15" height="7" fill="#cf5f27"/><path d="M5 10.5 L2.8 12.5 L5 14.5 M7.8 10.5 L10 12.5 L7.8 14.5" stroke="#3a2a22" stroke-width="1.2" fill="none"/></svg>
<div class="t" style="left:93px;top:485px;color:#bbbbbb;">dimens.xml</div>
<svg class="a" style="left:75px;top:502px" width="16" height="16" viewBox="0 0 16 16"><path d="M2 5 L6 1 V5 Z M7 1 H12 V8 H2 V6 H7 Z" fill="#9aa7b0"/><rect x="0" y="9" width="15" height="7" fill="#cf5f27"/><path d="M5 10.5 L2.8 12.5 L5 14.5 M7.8 10.5 L10 12.5 L7.8 14.5" stroke="#3a2a22" stroke-width="1.2" fill="none"/></svg>
<div class="t" style="left:93px;top:505px;color:#bbbbbb;">font_certs.xml</div>
<svg class="a" style="left:75px;top:522px" width="16" height="16" viewBox="0 0 16 16"><path d="M2 5 L6 1 V5 Z M7 1 H12 V8 H2 V6 H7 Z" fill="#9aa7b0"/><rect x="0" y="9" width="15" height="7" fill="#cf5f27"/><path d="M5 10.5 L2.8 12.5 L5 14.5 M7.8 10.5 L10 12.5 L7.8 14.5" stroke="#3a2a22" stroke-width="1.2" fill="none"/></svg>
<div class="t" style="left:93px;top:525px;color:#bbbbbb;">ic_launcher_background.xml</div>
<svg class="a" style="left:75px;top:542px" width="16" height="16" viewBox="0 0 16 16"><path d="M2 5 L6 1 V5 Z M7 1 H12 V8 H2 V6 H7 Z" fill="#9aa7b0"/><rect x="0" y="9" width="15" height="7" fill="#cf5f27"/><path d="M5 10.5 L2.8 12.5 L5 14.5 M7.8 10.5 L10 12.5 L7.8 14.5" stroke="#3a2a22" stroke-width="1.2" fill="none"/></svg>
<div class="t" style="left:93px;top:545px;color:#bbbbbb;">preloaded_fonts.xml</div>
<svg class="a" style="left:75px;top:562px" width="16" height="16" viewBox="0 0 16 16"><path d="M2 5 L6 1 V5 Z M7 1 H12 V8 H2 V6 H7 Z" fill="#9aa7b0"/><rect x="0" y="9" width="15" height="7" fill="#cf5f27"/><path d="M5 10.5 L2.8 12.5 L5 14.5 M7.8 10.5 L10 12.5 L7.8 14.5" stroke="#3a2a22" stroke-width="1.2" fill="none"/></svg>
<div class="t" style="left:93px;top:565px;color:#bbbbbb;">strings.xml</div>
<svg class="a" style="left:58px;top:586px" width="8" height="10" viewBox="0 0 8 10"><path d="M0 0 L8 5 L0 10 Z" fill="#afb1b3"/></svg>
<svg class="a" style="left:75px;top:584px" width="17" height="14" viewBox="0 0 17 14"><path d="M0 0 H5.5 L7 2 H14 V11 H0 Z" fill="#8e9ba4"/><circle cx="5.5" cy="6.5" r="2.1" fill="#34383a"/></svg>
<div class="t" style="left:93px;top:585px;color:#bbbbbb;">styles<span style="color:#787878"> (2)</span></div>
<svg class="a" style="left:22px;top:606px" width="8" height="10" viewBox="0 0 8 10"><path d="M0 0 L8 5 L0 10 Z" fill="#afb1b3"/></svg>
<svg class="a" style="left:39px;top:604px" width="17" height="14" viewBox="0 0 17 14"><path d="M0 0 H5.5 L7 2 H14 V11 H0 Z" fill="#8e9ba4"/><rect x="8" y="6" width="8" height="8" fill="#3c3f41"/><rect x="9" y="7" width="6" height="1" fill="#e0a732"/><rect x="9" y="9" width="6" height="1" fill="#e0a732"/><rect x="9" y="11" width="6" height="1" fill="#e0a732"/><rect x="9" y="13" width="6" height="1" fill="#e0a732"/></svg>
<div class="t" style="left:57px;top:605px;color:#bbbbbb;">res<span style="color:#787878"> (generated)</span></div>
<svg class="a" style="left:4px;top:626px" width="8" height="10" viewBox="0 0 8 10"><path d="M0 0 L8 5 L0 10 Z" fill="#afb1b3"/></svg>
<svg class="a" style="left:21px;top:625px" width="17" height="14" viewBox="0 0 17 14"><path d="M0 0 H5.5 L7 2 H14 V11 H0 Z" fill="#8e9ba4"/><circle cx="12" cy="9.5" r="3.3" fill="#3c3f41"/><circle cx="12" cy="9.5" r="2.5" fill="#62b543"/></svg>
<div class="t" style="left:39px;top:625px;color:#bbbbbb;font-weight:bold;letter-spacing:-0.2px;">infix</div>
<svg class="a" style="left:3px;top:647px" width="9" height="8" viewBox="0 0 9 8"><path d="M0 0 H9 L4.5 8 Z" fill="#afb1b3"/></svg>
<svg class="a" style="left:21px;top:645px" width="17" height="14" viewBox="0 0 17 14"><path d="M0 0 H5.5 L7 2 H14 V11 H0 Z" fill="#8e9ba4"/><rect x="6" y="3" width="11" height="11" fill="#3c3f41"/><rect x="7" y="3" width="8" height="1" fill="#8e9ba4"/><rect x="15" y="3" width="1" height="2" fill="#8e9ba4"/><rect x="7" y="6" width="2" height="7" fill="#62b543"/><rect x="10.5" y="5" width="2.5" height="8" fill="#afb1b3"/><rect x="14.5" y="6" width="2" height="7" fill="#40b6e0"/></svg>
<div class="t" style="left:39px;top:645px;color:#bbbbbb;font-weight:bold;letter-spacing:-0.2px;">rocket_library</div>
<svg class="a" style="left:22px;top:666px" width="8" height="10" viewBox="0 0 8 10"><path d="M0 0 L8 5 L0 10 Z" fill="#afb1b3"/></svg>
<svg class="a" style="left:39px;top:664px" width="17" height="14" viewBox="0 0 17 14"><path d="M0 0 H5.5 L7 2 H14 V11 H0 Z" fill="#3d8eb0"/></svg>
<div class="t" style="left:57px;top:665px;color:#bbbbbb;">manifests</div>
<svg class="a" style="left:22px;top:686px" width="8" height="10" viewBox="0 0 8 10"><path d="M0 0 L8 5 L0 10 Z" fill="#afb1b3"/></svg>
<svg class="a" style="left:39px;top:684px" width="17" height="14" viewBox="0 0 17 14"><path d="M0 0 H5.5 L7 2 H14 V11 H0 Z" fill="#3d8eb0"/></svg>
<div class="t" style="left:57px;top:685px;color:#bbbbbb;">java</div>
<div class="a" style="left:295px;top:0px;width:8px;height:426px;background:rgba(255,255,255,0.16)"></div>
<div class="a" style="left:1px;top:681px;width:244px;height:8px;background:rgba(120,122,124,0.55)"></div>
</div>
<div class="a" style="left:326px;top:83px;width:1021px;height:24px;background:#3c3f41;"></div>
<div class="a" style="left:326px;top:106px;width:1021px;height:1px;background:#4f5052;"></div>
<svg class="a" style="left:334px;top:88px;" width="16" height="16" viewBox="0 0 16 16"><circle cx="7" cy="7.5" r="7" fill="#3f8aa6"/><path d="M9.8 5.8 A3.2 3.2 0 1 0 7.5 10.8" stroke="#23343b" stroke-width="1.2" fill="none"/><rect x="7" y="7" width="9" height="9" fill="#3c3f41"/><path d="M8 8 H11.5 L8 11.5 Z" fill="#18b2f5"/><path d="M11.5 8 H15 L8.7 15 H8 V11.5 Z" fill="#f48323"/><path d="M8 15 V13.5 L9 15 Z" fill="#e95a9a"/><path d="M8.7 15 L11.8 11.5 L15 15 Z" fill="#18b2f5"/></svg>
<div class="t" style="left:353px;top:90px;font-size:12px;color:#6897bb;font-family:'Liberation Sans',sans-serif;letter-spacing:0.3px;">HomeActivity.kt</div>
<svg class="a" style="left:446px;top:92px;" width="8" height="8" viewBox="0 0 8 8"><path d="M0.5 0.5 L7.5 7.5 M7.5 0.5 L0.5 7.5" stroke="#6e7072" stroke-width="1"/></svg>
<div class="a" style="left:462px;top:83px;width:104px;height:24px;background:#4e5254;"></div>
<div class="a" style="left:462px;top:104px;width:104px;height:3px;background:#4a9fc7;"></div>
<svg class="a" style="left:470px;top:87px;" width="16" height="16" viewBox="0 0 16 16"><path d="M2 5 L6 1 V5 Z M7 1 H12 V8 H2 V6 H7 Z" fill="#9aa7b0"/><rect x="0" y="9" width="15" height="7" fill="#cf5f27"/><path d="M5 10.5 L2.8 12.5 L5 14.5 M7.8 10.5 L10 12.5 L7.8 14.5" stroke="#3a2a22" stroke-width="1.2" fill="none"/></svg>
<div class="t" style="left:489px;top:90px;font-size:12px;color:#bbbbbb;font-family:'Liberation Sans',sans-serif;">colors.xml</div>
<svg class="a" style="left:552px;top:92px;" width="8" height="8" viewBox="0 0 8 8"><path d="M0.5 0.5 L7.5 7.5 M7.5 0.5 L0.5 7.5" stroke="#7e8082" stroke-width="1"/></svg>
<div class="a" style="left:325px;top:107px;width:57px;height:668px;background:#313335;"></div>
<div class="a" style="left:382px;top:107px;width:1px;height:668px;background:#555555;"></div>
<div class="a" style="left:383px;top:107px;width:955px;height:668px;background:#2b2b2b;"></div>
<div class="a" style="left:1338px;top:107px;width:9px;height:668px;background:#2b2b2b;"></div>
<div class="a" style="left:383px;top:210px;width:955px;height:17px;background:#323232;"></div>
<div class="a" style="left:1088px;top:107px;width:1px;height:668px;background:#444444;"></div>
<div class="t" style="left:338px;top:109px;font-family:'Liberation Mono',monospace;font-size:11.67px;line-height:17px;color:#606366">1</div>
<div class="t" style="left:388px;top:109px;font-family:'Liberation Mono',monospace;font-size:11.67px;line-height:17px;color:#a9b7c6"><span style="color:#e8bf6a">&lt;?xml</span><span style="color:#bababa"> version=</span><span style="color:#6a8759">"1.0"</span><span style="color:#bababa"> encoding=</span><span style="color:#6a8759">"utf-8"</span><span style="color:#e8bf6a">?&gt;</span></div>
<div class="t" style="left:338px;top:126px;font-family:'Liberation Mono',monospace;font-size:11.67px;line-height:17px;color:#606366">2</div>
<div class="t" style="left:388px;top:126px;font-family:'Liberation Mono',monospace;font-size:11.67px;line-height:17px;color:#a9b7c6"><span style="color:#e8bf6a">&lt;resources&gt;</span></div>
<div class="t" style="left:338px;top:143px;font-family:'Liberation Mono',monospace;font-size:11.67px;line-height:17px;color:#606366">3</div>
<div class="a" style="left:355px;top:146px;width:8px;height:8px;background:#5353ae;"></div>
<div class="t" style="left:388px;top:143px;font-family:'Liberation Mono',monospace;font-size:11.67px;line-height:17px;color:#a9b7c6">    <span style="color:#e8bf6a">&lt;color</span><span style="color:#bababa"> name=</span><span style="color:#6a8759">"colorPrimary"</span><span style="color:#e8bf6a">&gt;</span><span style="color:#a9b7c6">#5353AE</span><span style="color:#e8bf6a">&lt;/color&gt;</span></div>
<div class="t" style="left:338px;top:160px;font-family:'Liberation Mono',monospace;font-size:11.67px;line-height:17px;color:#606366">4</div>
<div class="a" style="left:355px;top:163px;width:8px;height:8px;background:#9267d7;"></div>
<div class="t" style="left:388px;top:160px;font-family:'Liberation Mono',monospace;font-size:11.67px;line-height:17px;color:#a9b7c6">    <span style="color:#e8bf6a">&lt;color</span><span style="color:#bababa"> name=</span><span style="color:#6a8759">"colorPrimaryDark"</span><span style="color:#e8bf6a">&gt;</span><span style="color:#a9b7c6">#9267D7</span><span style="color:#e8bf6a">&lt;/color&gt;</span></div>
<div class="t" style="left:338px;top:177px;font-family:'Liberation Mono',monospace;font-size:11.67px;line-height:17px;color:#606366">5</div>
<div class="a" style="left:355px;top:180px;width:8px;height:8px;background:#8277b0;"></div>
<div class="t" style="left:388px;top:177px;font-family:'Liberation Mono',monospace;font-size:11.67px;line-height:17px;color:#a9b7c6">    <span style="color:#e8bf6a">&lt;color</span><span style="color:#bababa"> name=</span><span style="color:#6a8759">"colorAccent"</span><span style="color:#e8bf6a">&gt;</span><span style="color:#a9b7c6">#8277B0</span><span style="color:#e8bf6a">&lt;/color&gt;</span></div>
<div class="t" style="left:338px;top:194px;font-family:'Liberation Mono',monospace;font-size:11.67px;line-height:17px;color:#606366">6</div>
<div class="a" style="left:355px;top:197px;width:8px;height:8px;background:#2f302d;"></div>
<div class="t" style="left:388px;top:194px;font-family:'Liberation Mono',monospace;font-size:11.67px;line-height:17px;color:#a9b7c6">    <span style="color:#e8bf6a">&lt;color</span><span style="color:#bababa"> name=</span><span style="color:#6a8759">"colorPrimaryIcon"</span><span style="color:#e8bf6a">&gt;</span><span style="color:#a9b7c6">#2f302d</span><span style="color:#e8bf6a">&lt;/color&gt;</span></div>
<div class="t" style="left:338px;top:211px;font-family:'Liberation Mono',monospace;font-size:11.67px;line-height:17px;color:#a4a3a3">7</div>
<div class="a" style="left:355px;top:214px;width:8px;height:8px;background:#ffffff;"></div>
<div class="t" style="left:388px;top:211px;font-family:'Liberation Mono',monospace;font-size:11.67px;line-height:17px;color:#a9b7c6">    <span style="color:#e8bf6a">&lt;color</span><span style="color:#bababa"> name=</span><span style="color:#6a8759">"colorAccentIcon"</span><span style="color:#e8bf6a">&gt;</span><span style="color:#a9b7c6">@color/white</span><span style="color:#e8bf6a">&lt;/color&gt;</span></div>
<div class="t" style="left:338px;top:228px;font-family:'Liberation Mono',monospace;font-size:11.67px;line-height:17px;color:#606366">8</div>
<div class="t" style="left:338px;top:245px;font-family:'Liberation Mono',monospace;font-size:11.67px;line-height:17px;color:#606366">9</div>
<div class="a" style="left:355px;top:248px;width:8px;height:8px;background:#96ccc6;"></div>
<div class="t" style="left:388px;top:245px;font-family:'Liberation Mono',monospace;font-size:11.67px;line-height:17px;color:#a9b7c6">    <span style="color:#e8bf6a">&lt;color</span><span style="color:#bababa"> name=</span><span style="color:#6a8759">"colorSecondary"</span><span style="color:#e8bf6a">&gt;</span><span style="color:#a9b7c6">#96CCC6</span><span style="color:#e8bf6a">&lt;/color&gt;</span></div>
<div class="t" style="left:331px;top:262px;font-family:'Liberation Mono',monospace;font-size:11.67px;line-height:17px;color:#606366">10</div>
<div class="a" style="left:355px;top:265px;width:8px;height:8px;background:#3786d2;"></div>
<div class="t" style="left:388px;top:262px;font-family:'Liberation Mono',monospace;font-size:11.67px;line-height:17px;color:#a9b7c6">    <span style="color:#e8bf6a">&lt;color</span><span style="color:#bababa"> name=</span><span style="color:#6a8759">"colorSecondaryDark"</span><span style="color:#e8bf6a">&gt;</span><span style="color:#a9b7c6">#3786D2</span><span style="color:#e8bf6a">&lt;/color&gt;</span></div>
<div class="t" style="left:331px;top:279px;font-family:'Liberation Mono',monospace;font-size:11.67px;line-height:17px;color:#606366">11</div>
<div class="t" style="left:331px;top:296px;font-family:'Liberation Mono',monospace;font-size:11.67px;line-height:17px;color:#606366">12</div>
<div class="t" style="left:388px;top:296px;font-family:'Liberation Mono',monospace;font-size:11.67px;line-height:17px;color:#a9b7c6">    <span style="color:#808080">&lt;!-- theme colors --&gt;</span></div>
<div class="t" style="left:331px;top:313px;font-family:'Liberation Mono',monospace;font-size:11.67px;line-height:17px;color:#606366">13</div>
<div class="a" style="left:355px;top:316px;width:8px;height:8px;background:#aaaaaa;"></div>
<div class="t" style="left:388px;top:313px;font-family:'Liberation Mono',monospace;font-size:11.67px;line-height:17px;color:#a9b7c6">    <span style="color:#e8bf6a">&lt;color</span><span style="color:#bababa"> name=</span><span style="color:#6a8759">"accent"</span><span style="color:#e8bf6a">&gt;</span><span style="color:#a9b7c6">@android:color/darker_gray</span><span style="color:#e8bf6a">&lt;/color&gt;</span></div>
<div class="t" style="left:331px;top:330px;font-family:'Liberation Mono',monospace;font-size:11.67px;line-height:17px;color:#606366">14</div>
<div class="a" style="left:355px;top:333px;width:8px;height:8px;background:#5e4046;"></div>
<div class="t" style="left:388px;top:330px;font-family:'Liberation Mono',monospace;font-size:11.67px;line-height:17px;color:#a9b7c6">    <span style="color:#e8bf6a">&lt;color</span><span style="color:#bababa"> name=</span><span style="color:#6a8759">"accent_translucent"</span><span style="color:#e8bf6a">&gt;</span><span style="color:#a9b7c6">#88BC5E6F</span><span style="color:#e8bf6a">&lt;/color&gt;</span></div>
<div class="t" style="left:331px;top:347px;font-family:'Liberation Mono',monospace;font-size:11.67px;line-height:17px;color:#606366">15</div>
<div class="a" style="left:355px;top:350px;width:8px;height:8px;background:#9267d7;"></div>
<div class="t" style="left:388px;top:347px;font-family:'Liberation Mono',monospace;font-size:11.67px;line-height:17px;color:#a9b7c6">    <span style="color:#e8bf6a">&lt;color</span><span style="color:#bababa"> name=</span><span style="color:#6a8759">"button_normal"</span><span style="color:#e8bf6a">&gt;</span><span style="color:#a9b7c6">@color/colorPrimaryDark</span><span style="color:#e8bf6a">&lt;/color&gt;</span></div>
<div class="t" style="left:331px;top:364px;font-family:'Liberation Mono',monospace;font-size:11.67px;line-height:17px;color:#606366">16</div>
<div class="a" style="left:355px;top:367px;width:8px;height:8px;background:#5353ae;"></div>
<div class="t" style="left:388px;top:364px;font-family:'Liberation Mono',monospace;font-size:11.67px;line-height:17px;color:#a9b7c6">    <span style="color:#e8bf6a">&lt;color</span><span style="color:#bababa"> name=</span><span style="color:#6a8759">"button_disable"</span><span style="color:#e8bf6a">&gt;</span><span style="color:#a9b7c6">@color/colorPrimary</span><span style="color:#e8bf6a">&lt;/color&gt;</span></div>
<div class="t" style="left:331px;top:381px;font-family:'Liberation Mono',monospace;font-size:11.67px;line-height:17px;color:#606366">17</div>
<div class="a" style="left:355px;top:384px;width:8px;height:8px;background:#5353ae;"></div>
<div class="t" style="left:388px;top:381px;font-family:'Liberation Mono',monospace;font-size:11.67px;line-height:17px;color:#a9b7c6">    <span style="color:#e8bf6a">&lt;color</span><span style="color:#bababa"> name=</span><span style="color:#6a8759">"button_pressed"</span><span style="color:#e8bf6a">&gt;</span><span style="color:#a9b7c6">@color/button_disable</span><span style="color:#e8bf6a">&lt;/color&gt;</span></div>
<div class="t" style="left:331px;top:398px;font-family:'Liberation Mono',monospace;font-size:11.67px;line-height:17px;color:#606366">18</div>
<div class="a" style="left:355px;top:401px;width:8px;height:8px;background:#cfd4da;"></div>
<div class="t" style="left:388px;top:398px;font-family:'Liberation Mono',monospace;font-size:11.67px;line-height:17px;color:#a9b7c6">    <span style="color:#e8bf6a">&lt;color</span><span style="color:#bababa"> name=</span><span style="color:#6a8759">"divider"</span><span style="color:#e8bf6a">&gt;</span><span style="color:#a9b7c6">#cfd4da</span><span style="color:#e8bf6a">&lt;/color&gt;</span></div>
<div class="t" style="left:331px;top:415px;font-family:'Liberation Mono',monospace;font-size:11.67px;line-height:17px;color:#606366">19</div>
<div class="t" style="left:331px;top:432px;font-family:'Liberation Mono',monospace;font-size:11.67px;line-height:17px;color:#606366">20</div>
<div class="t" style="left:388px;top:432px;font-family:'Liberation Mono',monospace;font-size:11.67px;line-height:17px;color:#a9b7c6">    <span style="color:#808080">&lt;!-- Background colors --&gt;</span></div>
<div class="t" style="left:331px;top:449px;font-family:'Liberation Mono',monospace;font-size:11.67px;line-height:17px;color:#606366">21</div>
<div class="a" style="left:355px;top:452px;width:8px;height:8px;background:#f5f5f5;"></div>
<div class="t" style="left:388px;top:449px;font-family:'Liberation Mono',monospace;font-size:11.67px;line-height:17px;color:#a9b7c6">    <span style="color:#e8bf6a">&lt;color</span><span style="color:#bababa"> name=</span><span style="color:#6a8759">"bg_window"</span><span style="color:#e8bf6a">&gt;</span><span style="color:#a9b7c6">#FFF5F5F5</span><span style="color:#e8bf6a">&lt;/color&gt;</span></div>
<div class="t" style="left:331px;top:466px;font-family:'Liberation Mono',monospace;font-size:11.67px;line-height:17px;color:#606366">22</div>
<div class="a" style="left:355px;top:469px;width:8px;height:8px;background:#f2c3c0;"></div>
<div class="t" style="left:388px;top:466px;font-family:'Liberation Mono',monospace;font-size:11.67px;line-height:17px;color:#a9b7c6">    <span style="color:#e8bf6a">&lt;color</span><span style="color:#bababa"> name=</span><span style="color:#6a8759">"bg_accent"</span><span style="color:#e8bf6a">&gt;</span><span style="color:#a9b7c6">#f2c3c0</span><span style="color:#e8bf6a">&lt;/color&gt;</span></div>
<div class="t" style="left:331px;top:483px;font-family:'Liberation Mono',monospace;font-size:11.67px;line-height:17px;color:#606366">23</div>
<div class="t" style="left:331px;top:500px;font-family:'Liberation Mono',monospace;font-size:11.67px;line-height:17px;color:#606366">24</div>
<div class="t" style="left:388px;top:500px;font-family:'Liberation Mono',monospace;font-size:11.67px;line-height:17px;color:#a9b7c6">    <span style="color:#808080">&lt;!-- Material flat UI colors --&gt;</span></div>
<div class="t" style="left:331px;top:517px;font-family:'Liberation Mono',monospace;font-size:11.67px;line-height:17px;color:#606366">25</div>
<div class="a" style="left:355px;top:520px;width:8px;height:8px;background:#1abc9c;"></div>
<div class="t" style="left:388px;top:517px;font-family:'Liberation Mono',monospace;font-size:11.67px;line-height:17px;color:#a9b7c6">    <span style="color:#e8bf6a">&lt;color</span><span style="color:#bababa"> name=</span><span style="color:#6a8759">"material_flat_turquoise"</span><span style="color:#e8bf6a">&gt;</span><span style="color:#a9b7c6">#1abc9c</span><span style="color:#e8bf6a">&lt;/color&gt;</span></div>
<div class="t" style="left:331px;top:534px;font-family:'Liberation Mono',monospace;font-size:11.67px;line-height:17px;color:#606366">26</div>
<div class="a" style="left:355px;top:537px;width:8px;height:8px;background:#16a085;"></div>
<div class="t" style="left:388px;top:534px;font-family:'Liberation Mono',monospace;font-size:11.67px;line-height:17px;color:#a9b7c6">    <span style="color:#e8bf6a">&lt;color</span><span style="color:#bababa"> name=</span><span style="color:#6a8759">"material_flat_turquoise_dark"</span><span style="color:#e8bf6a">&gt;</span><span style="color:#a9b7c6">#16a085</span><span style="color:#e8bf6a">&lt;/color&gt;</span></div>
<div class="t" style="left:331px;top:551px;font-family:'Liberation Mono',monospace;font-size:11.67px;line-height:17px;color:#606366">27</div>
<div class="a" style="left:355px;top:554px;width:8px;height:8px;background:#2ecc71;"></div>
<div class="t" style="left:388px;top:551px;font-family:'Liberation Mono',monospace;font-size:11.67px;line-height:17px;color:#a9b7c6">    <span style="color:#e8bf6a">&lt;color</span><span style="color:#bababa"> name=</span><span style="color:#6a8759">"material_flat_green"</span><span style="color:#e8bf6a">&gt;</span><span style="color:#a9b7c6">#2ecc71</span><span style="color:#e8bf6a">&lt;/color&gt;</span></div>
<div class="t" style="left:331px;top:568px;font-family:'Liberation Mono',monospace;font-size:11.67px;line-height:17px;color:#606366">28</div>
<div class="a" style="left:355px;top:571px;width:8px;height:8px;background:#27ae60;"></div>
<div class="t" style="left:388px;top:568px;font-family:'Liberation Mono',monospace;font-size:11.67px;line-height:17px;color:#a9b7c6">    <span style="color:#e8bf6a">&lt;color</span><span style="color:#bababa"> name=</span><span style="color:#6a8759">"material_flat_green_dark"</span><span style="color:#e8bf6a">&gt;</span><span style="color:#a9b7c6">#27ae60</span><span style="color:#e8bf6a">&lt;/color&gt;</span></div>
<div class="t" style="left:331px;top:585px;font-family:'Liberation Mono',monospace;font-size:11.67px;line-height:17px;color:#606366">29</div>
<div class="a" style="left:355px;top:588px;width:8px;height:8px;background:#3498db;"></div>
<div class="t" style="left:388px;top:585px;font-family:'Liberation Mono',monospace;font-size:11.67px;line-height:17px;color:#a9b7c6">    <span style="color:#e8bf6a">&lt;color</span><span style="color:#bababa"> name=</span><span style="color:#6a8759">"material_flat_blue"</span><span style="color:#e8bf6a">&gt;</span><span style="color:#a9b7c6">#3498db</span><span style="color:#e8bf6a">&lt;/color&gt;</span></div>
<div class="t" style="left:331px;top:602px;font-family:'Liberation Mono',monospace;font-size:11.67px;line-height:17px;color:#606366">30</div>
<div class="a" style="left:355px;top:605px;width:8px;height:8px;background:#2980b9;"></div>
<div class="t" style="left:388px;top:602px;font-family:'Liberation Mono',monospace;font-size:11.67px;line-height:17px;color:#a9b7c6">    <span style="color:#e8bf6a">&lt;color</span><span style="color:#bababa"> name=</span><span style="color:#6a8759">"material_flat_blue_dark"</span><span style="color:#e8bf6a">&gt;</span><span style="color:#a9b7c6">#2980b9</span><span style="color:#e8bf6a">&lt;/color&gt;</span></div>
<div class="t" style="left:331px;top:619px;font-family:'Liberation Mono',monospace;font-size:11.67px;line-height:17px;color:#606366">31</div>
<div class="a" style="left:355px;top:622px;width:8px;height:8px;background:#9b59b6;"></div>
<div class="t" style="left:388px;top:619px;font-family:'Liberation Mono',monospace;font-size:11.67px;line-height:17px;color:#a9b7c6">    <span style="color:#e8bf6a">&lt;color</span><span style="color:#bababa"> name=</span><span style="color:#6a8759">"material_flat_amethyst"</span><span style="color:#e8bf6a">&gt;</span><span style="color:#a9b7c6">#9b59b6</span><span style="color:#e8bf6a">&lt;/color&gt;</span></div>
<div class="t" style="left:331px;top:636px;font-family:'Liberation Mono',monospace;font-size:11.67px;line-height:17px;color:#606366">32</div>
<div class="a" style="left:355px;top:639px;width:8px;height:8px;background:#8e44ad;"></div>
<div class="t" style="left:388px;top:636px;font-family:'Liberation Mono',monospace;font-size:11.67px;line-height:17px;color:#a9b7c6">    <span style="color:#e8bf6a">&lt;color</span><span style="color:#bababa"> name=</span><span style="color:#6a8759">"material_flat_amethyst_dark"</span><span style="color:#e8bf6a">&gt;</span><span style="color:#a9b7c6">#8e44ad</span><span style="color:#e8bf6a">&lt;/color&gt;</span></div>
<div class="t" style="left:331px;top:653px;font-family:'Liberation Mono',monospace;font-size:11.67px;line-height:17px;color:#606366">33</div>
<div class="a" style="left:355px;top:656px;width:8px;height:8px;background:#34495e;"></div>
<div class="t" style="left:388px;top:653px;font-family:'Liberation Mono',monospace;font-size:11.67px;line-height:17px;color:#a9b7c6">    <span style="color:#e8bf6a">&lt;color</span><span style="color:#bababa"> name=</span><span style="color:#6a8759">"material_flat_tasphalt"</span><span style="color:#e8bf6a">&gt;</span><span style="color:#a9b7c6">#34495e</span><span style="color:#e8bf6a">&lt;/color&gt;</span></div>
<div class="t" style="left:331px;top:670px;font-family:'Liberation Mono',monospace;font-size:11.67px;line-height:17px;color:#606366">34</div>
<div class="a" style="left:355px;top:673px;width:8px;height:8px;background:#2c3e50;"></div>
<div class="t" style="left:388px;top:670px;font-family:'Liberation Mono',monospace;font-size:11.67px;line-height:17px;color:#a9b7c6">    <span style="color:#e8bf6a">&lt;color</span><span style="color:#bababa"> name=</span><span style="color:#6a8759">"material_flat_tasphalt_dark"</span><span style="color:#e8bf6a">&gt;</span><span style="color:#a9b7c6">#2c3e50</span><span style="color:#e8bf6a">&lt;/color&gt;</span></div>
<div class="t" style="left:331px;top:687px;font-family:'Liberation Mono',monospace;font-size:11.67px;line-height:17px;color:#606366">35</div>
<div class="a" style="left:355px;top:690px;width:8px;height:8px;background:#f1c40f;"></div>
<div class="t" style="left:388px;top:687px;font-family:'Liberation Mono',monospace;font-size:11.67px;line-height:17px;color:#a9b7c6">    <span style="color:#e8bf6a">&lt;color</span><span style="color:#bababa"> name=</span><span style="color:#6a8759">"material_flat_sunflower"</span><span style="color:#e8bf6a">&gt;</span><span style="color:#a9b7c6">#f1c40f</span><span style="color:#e8bf6a">&lt;/color&gt;</span></div>
<div class="t" style="left:331px;top:704px;font-family:'Liberation Mono',monospace;font-size:11.67px;line-height:17px;color:#606366">36</div>
<div class="a" style="left:355px;top:707px;width:8px;height:8px;background:#f39c12;"></div>
<div class="t" style="left:388px;top:704px;font-family:'Liberation Mono',monospace;font-size:11.67px;line-height:17px;color:#a9b7c6">    <span style="color:#e8bf6a">&lt;color</span><span style="color:#bababa"> name=</span><span style="color:#6a8759">"material_flat_sunflower_dark"</span><span style="color:#e8bf6a">&gt;</span><span style="color:#a9b7c6">#f39c12</span><span style="color:#e8bf6a">&lt;/color&gt;</span></div>
<div class="t" style="left:331px;top:721px;font-family:'Liberation Mono',monospace;font-size:11.67px;line-height:17px;color:#606366">37</div>
<div class="a" style="left:355px;top:724px;width:8px;height:8px;background:#e67e22;"></div>
<div class="t" style="left:388px;top:721px;font-family:'Liberation Mono',monospace;font-size:11.67px;line-height:17px;color:#a9b7c6">    <span style="color:#e8bf6a">&lt;color</span><span style="color:#bababa"> name=</span><span style="color:#6a8759">"material_flat_carrot"</span><span style="color:#e8bf6a">&gt;</span><span style="color:#a9b7c6">#e67e22</span><span style="color:#e8bf6a">&lt;/color&gt;</span></div>
<div class="t" style="left:331px;top:738px;font-family:'Liberation Mono',monospace;font-size:11.67px;line-height:17px;color:#606366">38</div>
<div class="a" style="left:355px;top:741px;width:8px;height:8px;background:#d35400;"></div>
<div class="t" style="left:388px;top:738px;font-family:'Liberation Mono',monospace;font-size:11.67px;line-height:17px;color:#a9b7c6">    <span style="color:#e8bf6a">&lt;color</span><span style="color:#bababa"> name=</span><span style="color:#6a8759">"material_flat_carrot_dark"</span><span style="color:#e8bf6a">&gt;</span><span style="color:#a9b7c6">#d35400</span><span style="color:#e8bf6a">&lt;/color&gt;</span></div>
<div class="t" style="left:331px;top:755px;font-family:'Liberation Mono',monospace;font-size:11.67px;line-height:17px;color:#606366">39</div>
<div class="a" style="left:355px;top:758px;width:8px;height:8px;background:#e74c3c;"></div>
<div class="t" style="left:388px;top:755px;font-family:'Liberation Mono',monospace;font-size:11.67px;line-height:17px;color:#a9b7c6">    <span style="color:#e8bf6a">&lt;color</span><span style="color:#bababa"> name=</span><span style="color:#6a8759">"material_flat_red"</span><span style="color:#e8bf6a">&gt;</span><span style="color:#a9b7c6">#e74c3c</span><span style="color:#e8bf6a">&lt;/color&gt;</span></div>
<svg class="a" style="left:378px;top:129px;" width="10" height="11" viewBox="0 0 10 11"><path d="M0.5 0.5 H9.5 V6.5 L5 10.5 L0.5 6.5 Z" fill="#313335" stroke="#6e6e6e" stroke-width="1"/><path d="M2.5 4 H7.5" stroke="#8e8e8e" stroke-width="1"/></svg>
<svg class="a" style="left:397px;top:194px;" width="11" height="14" viewBox="0 0 11 14"><circle cx="5.5" cy="5" r="5" fill="#f4af3d"/><rect x="3" y="8" width="5" height="2" fill="#f4af3d"/><path d="M3 11.5 H8 M3 13.5 H8" stroke="#c8c8c8" stroke-width="1"/></svg>
<div class="a" style="left:407px;top:141px;width:370px;height:92px;background:transparent;border:3px solid #ff0000;border-radius:2px"></div>
<div class="a" style="left:1338px;top:124px;width:8px;height:292px;background:#4e4e4e;"></div>
<svg class="a" style="left:1334px;top:108px;" width="12" height="14" viewBox="0 0 12 14"><path d="M1.2 5.5 L4.5 8.5 L10.8 2" stroke="#499c54" stroke-width="3" fill="none"/><path d="M0.5 12.5 L3 10.5 L5.5 12.5 L8 10.5 L10.5 12.5 L11.5 11.5" stroke="#499c54" stroke-width="1" fill="none"/></svg>
<div class="a" style="left:325px;top:775px;width:1022px;height:23px;background:#323436;"></div>
<div class="a" style="left:325px;top:775px;width:1022px;height:1px;background:#3a3c3e;"></div>
<div class="t" style="left:392px;top:782px;font-size:12px;color:#bbbbbb;font-family:'Liberation Sans',sans-serif;">resources</div>
<svg class="a" style="left:453px;top:782px;" width="5" height="9" viewBox="0 0 5 9"><path d="M0.5 0.5 L4 4.5 L0.5 8.5" stroke="#606366" stroke-width="1" fill="none"/></svg>
<div class="t" style="left:466px;top:782px;font-size:12px;color:#bbbbbb;font-family:'Liberation Sans',sans-serif;">color</div>
<div class="a" style="left:1347px;top:83px;width:1px;height:716px;background:#4a4c4e;"></div>
<div class="a" style="left:1348px;top:83px;width:20px;height:716px;background:#3c3f41;"></div>
<svg class="a" style="left:1351px;top:93px;" width="15" height="12" viewBox="0 0 15 12"><path d="M1 11 V7.5 C1 5 3 3 6 3 H9.5 C11 3 11.5 4 11.5 5.5 V11 H9.5 V9.5 H8 V11 H6 V9.5 H4.5 V11 Z" fill="#afb1b3"/><path d="M10.5 7 C13 6 14.2 3.8 13.3 1.8 C12.8 0.9 12 0.8 11.6 1.3" stroke="#afb1b3" stroke-width="1.8" fill="none"/><circle cx="5.5" cy="5.5" r="0.6" fill="#3c3f41"/><circle cx="9" cy="5.5" r="0.6" fill="#3c3f41"/></svg>
<div class="t" style="left:1362px;top:110px;font-size:11px;color:#bbbbbb;transform-origin:0 0;transform:rotate(90deg)">Gradle</div>
<svg class="a" style="left:1352px;top:669px;" width="11" height="14" viewBox="0 0 11 14"><rect x="1.5" y="0.5" width="8" height="13" stroke="#afb1b3" stroke-width="1.3" fill="none"/><path d="M1.5 10.5 H9.5" stroke="#afb1b3" stroke-width="1.3"/></svg>
<div class="t" style="left:1362px;top:688px;font-size:11px;color:#bbbbbb;transform-origin:0 0;transform:rotate(90deg)">Device File Explorer</div>
<div class="a" style="left:0px;top:798px;width:1368px;height:1px;background:#4b4d4f;"></div>
<div class="a" style="left:0px;top:799px;width:1368px;height:21px;background:#3c3f41;"></div>
<div class="a" style="left:0px;top:820px;width:1368px;height:1px;background:#4a4b4b;"></div>
<div class="a" style="left:0px;top:821px;width:1368px;height:21px;background:#3c3f41;"></div>
<svg class="a" style="left:35px;top:805px;" width="10" height="11" viewBox="0 0 10 11"><path d="M1.5 11 V1.5 M1.5 6 H6 L6 3 M4 4 L6.5 1 L9 4" stroke="#afb1b3" stroke-width="1.6" fill="none"/></svg>
<div class="t" style="left:50px;top:805px;font-size:12px;color:#bbbbbb;font-family:'Liberation Sans',sans-serif;letter-spacing:-0.08px;"><span class="u">9</span>: Version Control</div>
<svg class="a" style="left:168px;top:805px;" width="10" height="10" viewBox="0 0 10 10"><path d="M0 1.5 H2 M4 1.5 H10 M0 5 H2 M4 5 H10 M0 8.5 H2 M4 8.5 H10" stroke="#afb1b3" stroke-width="1.6"/></svg>
<div class="t" style="left:183px;top:805px;font-size:12px;color:#bbbbbb;font-family:'Liberation Sans',sans-serif;letter-spacing:-0.6px;">TODO</div>
<svg class="a" style="left:235px;top:804px;" width="12" height="12" viewBox="0 0 12 12"><rect x="0" y="0" width="12" height="11" fill="#afb1b3"/><path d="M2 2.5 L4.5 5 L2 7.5" stroke="#3c3f41" stroke-width="1.2" fill="none"/><path d="M5 8.5 H9" stroke="#3c3f41" stroke-width="1"/></svg>
<div class="t" style="left:252px;top:805px;font-size:12px;color:#bbbbbb;font-family:'Liberation Sans',sans-serif;">Terminal</div>
<svg class="a" style="left:316px;top:804px;" width="14" height="14" viewBox="0 0 14 14"><path d="M4.5 0.5 H7.5 L4.5 3.5 L2 6.5 L0 5 Z" fill="#afb1b3"/><path d="M4.2 4 L12.2 12" stroke="#afb1b3" stroke-width="2.8"/></svg>
<div class="t" style="left:334px;top:805px;font-size:12px;color:#bbbbbb;font-family:'Liberation Sans',sans-serif;">Build</div>
<svg class="a" style="left:380px;top:806px;" width="12" height="9" viewBox="0 0 12 9"><rect x="0" y="0" width="11" height="2" fill="#afb1b3"/><rect x="0" y="3.5" width="6" height="2" fill="#afb1b3"/><rect x="0" y="7" width="9" height="2" fill="#afb1b3"/></svg>
<div class="t" style="left:396px;top:805px;font-size:12px;color:#bbbbbb;font-family:'Liberation Sans',sans-serif;letter-spacing:-0.4px;"><span class="u">6</span>: Logcat</div>
<svg class="a" style="left:464px;top:803px;" width="14" height="14" viewBox="0 0 14 14"><ellipse cx="6" cy="7.5" rx="4.5" ry="5.5" fill="#afb1b3"/><path d="M3 0.5 L4.5 2.5 M9 0.5 L7.5 2.5 M0 5 H2 M10 5 H12 M0 9 H2 M10 9 H12" stroke="#afb1b3" stroke-width="1.2"/><circle cx="10.5" cy="11.5" r="2.5" fill="#3c3f41"/><circle cx="10.5" cy="11.5" r="1.8" fill="#00d000"/></svg>
<div class="t" style="left:480px;top:805px;font-size:12px;color:#bbbbbb;font-family:'Liberation Sans',sans-serif;"><span class="u">5</span>: Debug</div>
<svg class="a" style="left:547px;top:806px;" width="13" height="9" viewBox="0 0 13 9"><path d="M1.5 8.5 A5 5 0 0 1 11.5 8.5" stroke="#afb1b3" stroke-width="2" fill="none"/><path d="M6 8 L9 4" stroke="#afb1b3" stroke-width="1.5"/></svg>
<div class="t" style="left:564px;top:805px;font-size:12px;color:#bbbbbb;font-family:'Liberation Sans',sans-serif;">Profiler</div>
<svg class="a" style="left:1269px;top:803px;" width="15" height="15" viewBox="0 0 15 15"><path d="M13.5 13.5 H7.5 A6 6 0 1 1 13.5 7.5 Z" stroke="#afb1b3" stroke-width="1.3" fill="none" stroke-linejoin="round"/></svg>
<div class="t" style="left:1287px;top:805px;font-size:12px;color:#bbbbbb;font-family:'Liberation Sans',sans-serif;letter-spacing:-0.5px;">Event Log</div>
<svg class="a" style="left:9px;top:826px;" width="13" height="12" viewBox="0 0 13 12"><rect x="3.5" y="0.5" width="9" height="9" stroke="#afb1b3" fill="none"/><path d="M0.5 3 V11.5 H9" stroke="#afb1b3" fill="none"/></svg>
<div class="t" style="left:30px;top:826px;font-size:12px;color:#bbbbbb;font-family:'Liberation Sans',sans-serif;letter-spacing:-0.15px;">Install successfully finished in 6 s 284 ms. (15 minutes ago)</div>
<div class="t" style="left:1024px;top:826px;font-size:12px;color:#bbbbbb;font-family:'Liberation Sans',sans-serif;">7:25</div>
<div class="t" style="left:1056px;top:826px;font-size:12px;color:#bbbbbb;font-family:'Liberation Sans',sans-serif;letter-spacing:-0.8px;">CRLF</div>
<svg class="a" style="left:1088px;top:827px;" width="6" height="10" viewBox="0 0 6 10"><path d="M0.3 3.8 L2.8 0.5 L5.3 3.8 Z M0.3 5.8 L2.8 9.1 L5.3 5.8 Z" fill="#afb1b3"/></svg>
<div class="t" style="left:1111px;top:826px;font-size:12px;color:#8c8c8c;font-family:'Liberation Sans',sans-serif;letter-spacing:-0.4px;">UTF-8</div>
<div class="t" style="left:1156px;top:826px;font-size:12px;color:#bbbbbb;font-family:'Liberation Sans',sans-serif;letter-spacing:-0.2px;">4 spaces</div>
<svg class="a" style="left:1205px;top:827px;" width="6" height="10" viewBox="0 0 6 10"><path d="M0.3 3.8 L2.8 0.5 L5.3 3.8 Z M0.3 5.8 L2.8 9.1 L5.3 5.8 Z" fill="#afb1b3"/></svg>
<div class="t" style="left:1224px;top:826px;font-size:12px;color:#bbbbbb;font-family:'Liberation Sans',sans-serif;letter-spacing:-0.15px;">Git: version-1.4</div>
<svg class="a" style="left:1307px;top:827px;" width="6" height="10" viewBox="0 0 6 10"><path d="M0.3 3.8 L2.8 0.5 L5.3 3.8 Z M0.3 5.8 L2.8 9.1 L5.3 5.8 Z" fill="#afb1b3"/></svg>
<svg class="a" style="left:1323px;top:826px;" width="12" height="13" viewBox="0 0 12 13"><path d="M2.5 6 V3.5 A3 3 0 0 1 8.5 3.5" stroke="#afb1b3" stroke-width="1.5" fill="none"/><rect x="3" y="6" width="9" height="7" fill="#afb1b3"/></svg>
<svg class="a" style="left:1349px;top:825px;" width="13" height="14" viewBox="0 0 13 14"><path d="M3 4.5 V2 A3.5 2 0 0 1 10 2 V4.5 Z" fill="#afb1b3"/><rect x="0.5" y="4" width="12" height="1.5" rx="0.7" fill="#afb1b3"/><ellipse cx="6.5" cy="8.5" rx="3.8" ry="3.5" fill="#afb1b3"/><circle cx="5" cy="8" r="0.7" fill="#3c3f41"/><circle cx="8" cy="8" r="0.7" fill="#3c3f41"/><path d="M5 10.3 H8" stroke="#3c3f41" stroke-width="0.7"/><path d="M1 13.5 Q6.5 10.5 12 13.5 Z" fill="#afb1b3"/></svg>
<svg class="a" style="left:605px;top:665px;" width="56" height="3" viewBox="0 0 56 3"><path d="M0 2.5 L2 0.5 L4 2.5 L6 0.5 L8 2.5 L10 0.5 L12 2.5 L14 0.5 L16 2.5 L18 0.5 L20 2.5 L22 0.5 L24 2.5 L26 0.5 L28 2.5 L30 0.5 L32 2.5 L34 0.5 L36 2.5 L38 0.5 L40 2.5 L42 0.5 L44 2.5 L46 0.5 L48 2.5 L50 0.5 L52 2.5 L54 0.5 L56 2.5" stroke="#6a8759" stroke-width="0.9" fill="none"/></svg>
<svg class="a" style="left:605px;top:682px;" width="56" height="3" viewBox="0 0 56 3"><path d="M0 2.5 L2 0.5 L4 2.5 L6 0.5 L8 2.5 L10 0.5 L12 2.5 L14 0.5 L16 2.5 L18 0.5 L20 2.5 L22 0.5 L24 2.5 L26 0.5 L28 2.5 L30 0.5 L32 2.5 L34 0.5 L36 2.5 L38 0.5 L40 2.5 L42 0.5 L44 2.5 L46 0.5 L48 2.5 L50 0.5 L52 2.5 L54 0.5 L56 2.5" stroke="#6a8759" stroke-width="0.9" fill="none"/></svg>
</body></html>
